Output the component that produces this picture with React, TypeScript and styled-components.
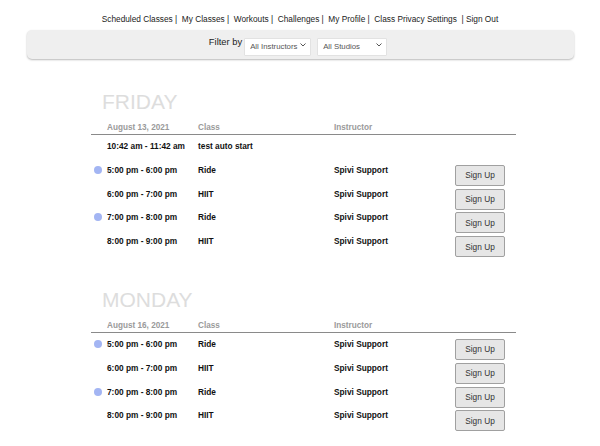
import React from 'react';
import styled, { createGlobalStyle } from 'styled-components';

const GlobalStyle = createGlobalStyle`
  body {
    margin: 0;
    background: #ffffff;
    font-family: "Liberation Sans", Arial, sans-serif;
    color: #222;
  }
`;

const Nav = styled.nav`
  padding-top: 14px;
  text-align: center;
  font-size: 8.3px;
  line-height: 10px;
  color: #222;
  white-space: nowrap;
`;

const NavLink = styled.a`
  color: #222;
  text-decoration: none;
`;

const FilterBar = styled.div`
  margin: 6px 26px 0 27px;
  height: 29px;
  background: #efefef;
  border-radius: 5px;
  box-shadow: 0 1px 2px rgba(0, 0, 0, 0.28);
  display: flex;
  justify-content: center;
  align-items: flex-start;
  padding-top: 5px;
  box-sizing: border-box;
  padding-left: 0;
  padding-right: 5px;
`;

const FilterLabel = styled.span`
  font-size: 9.4px;
  line-height: 11px;
  margin-top: 1px;
  margin-right: 2px;
  color: #222;
`;

const SelectWrap = styled.div<{ $width: number }>`
  position: relative;
  width: ${(p) => p.$width}px;
  height: 18px;
  margin-left: ${(p) => (p.$width > 68 ? 6 : 0)}px;
`;

const Select = styled.select`
  appearance: none;
  -webkit-appearance: none;
  width: 100%;
  height: 100%;
  border: 1px solid #e2e2e2;
  border-radius: 1px;
  background: #ffffff;
  font-family: "Liberation Sans", Arial, sans-serif;
  font-size: 7.8px;
  color: #555;
  padding: 0 0 0 5px;
  outline: none;
`;

const Chevron = styled.svg`
  position: absolute;
  right: 5px;
  top: 8px;
  pointer-events: none;
`;

const Content = styled.main`
  width: 425px;
  margin: 31px 0 0 91px;
`;

const Section = styled.section`
  margin-bottom: 28px;
`;

const DayTitle = styled.h2`
  margin: 0 0 0 11px;
  font-size: 21px;
  line-height: 24px;
  font-weight: 400;
  color: #dddddd;
`;

const columns = '16px 91px 136px 121px 61px';

const HeaderRow = styled.div`
  display: grid;
  grid-template-columns: ${columns};
  margin-top: 9px;
  padding-bottom: 1px;
  border-bottom: 1px solid #8a8a8a;
  font-size: 8.2px;
  line-height: 10px;
  font-weight: 700;
  color: #9a9a9a;
`;

const Rows = styled.div`
  padding-top: 6px;
`;

const Row = styled.div`
  display: grid;
  grid-template-columns: ${columns};
  height: 23.8px;
  align-items: start;
  font-size: 8.3px;
  line-height: 10px;
  font-weight: 700;
  color: #111;
`;

const DotCell = styled.div`
  height: 10px;
  display: flex;
  align-items: center;
`;

const Dot = styled.span`
  width: 8px;
  height: 8px;
  border-radius: 50%;
  margin-left: 3px;
  background: #a3b5f3;
`;

const SignUp = styled.button`
  width: 50px;
  height: 21px;
  padding: 0;
  border: 1px solid #a0a0a0;
  border-radius: 2px;
  background: #e6e6e6;
  font-family: "Liberation Sans", Arial, sans-serif;
  font-size: 8.3px;
  color: #333;
`;

type ClassRow = {
  time: string;
  name: string;
  instructor?: string;
  live?: boolean;
};

type Day = { title: string; date: string; rows: ClassRow[] };

const standard: ClassRow[] = [
  { time: '5:00 pm - 6:00 pm', name: 'Ride', instructor: 'Spivi Support', live: true },
  { time: '6:00 pm - 7:00 pm', name: 'HIIT', instructor: 'Spivi Support' },
  { time: '7:00 pm - 8:00 pm', name: 'Ride', instructor: 'Spivi Support', live: true },
  { time: '8:00 pm - 9:00 pm', name: 'HIIT', instructor: 'Spivi Support' },
];

const days: Day[] = [
  {
    title: 'FRIDAY',
    date: 'August 13, 2021',
    rows: [{ time: '10:42 am - 11:42 am', name: 'test auto start' }, ...standard],
  },
  { title: 'MONDAY', date: 'August 16, 2021', rows: standard },
];

const links = [
  'Scheduled Classes',
  'My Classes',
  'Workouts',
  'Challenges',
  'My Profile',
  'Class Privacy Settings',
  'Sign Out',
];

function ChevronIcon() {
  return (
    <Chevron width="6" height="4" viewBox="0 0 6 4">
      <path d="M0.5 0.5 L3 3 L5.5 0.5" fill="none" stroke="#555" strokeWidth="1" />
    </Chevron>
  );
}

export default function App() {
  return (
    <>
      <GlobalStyle />
      <Nav>
        {links.map((l, i) => (
          <React.Fragment key={l}>
            <NavLink href="#">{l}</NavLink>
            {i < links.length - 1 && (i === links.length - 2 ? '\u00a0 | ' : ' |\u00a0 ')}
          </React.Fragment>
        ))}
      </Nav>
      <FilterBar>
        <FilterLabel>Filter by</FilterLabel>
        <SelectWrap $width={67}>
          <Select defaultValue="all">
            <option value="all">All Instructors</option>
          </Select>
          <ChevronIcon />
        </SelectWrap>
        <SelectWrap $width={70}>
          <Select defaultValue="all">
            <option value="all">All Studios</option>
          </Select>
          <ChevronIcon />
        </SelectWrap>
      </FilterBar>
      <Content>
        {days.map((day) => (
          <Section key={day.title}>
            <DayTitle>{day.title}</DayTitle>
            <HeaderRow>
              <span />
              <span>{day.date}</span>
              <span>Class</span>
              <span>Instructor</span>
              <span />
            </HeaderRow>
            <Rows>
              {day.rows.map((r, i) => (
                <Row key={i}>
                  <DotCell>{r.live && <Dot />}</DotCell>
                  <span>{r.time}</span>
                  <span>{r.name}</span>
                  <span>{r.instructor ?? ''}</span>
                  <span>{r.instructor && <SignUp>Sign Up</SignUp>}</span>
                </Row>
              ))}
            </Rows>
          </Section>
        ))}
      </Content>
    </>
  );
}
